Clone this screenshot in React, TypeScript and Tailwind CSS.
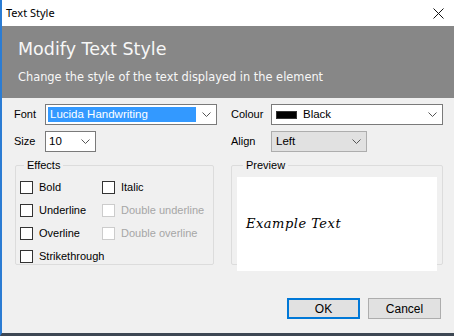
import React from 'react';

const Chevron: React.FC<{ className?: string }> = ({ className = '' }) => (
    <svg width="9" height="5" viewBox="0 0 9 5" className={className}>
        <polyline points="0.5,0.5 4.5,4.5 8.5,0.5" fill="none" stroke="#555" strokeWidth="1" />
    </svg>
);

const Check: React.FC<{ label: string; disabled?: boolean; width?: string }> = ({ label, disabled = false, width = 'w-[82px]' }) => (
    <label className={`flex items-center h-[13px] ${width}`}>
        <span
            className={`w-[13px] h-[13px] shrink-0 border bg-white ${disabled ? 'border-[#cccccc]' : 'border-[#333333]'}`}
        />
        <span className={`ml-[6px] whitespace-nowrap ${disabled ? 'text-[#a6a6a6]' : 'text-black'}`}>{label}</span>
    </label>
);

const Button: React.FC<{ label: string; primary?: boolean }> = ({ label, primary = false }) => (
    <button
        className={`w-[73px] h-[21px] bg-[#e1e1e1] flex items-center justify-center ${primary ? 'border-2 border-[#0078d7]' : 'border border-[#adadad]'}`}
    >
        {label}
    </button>
);

export default function App() {
    return (
        <div
            className="w-[454px] h-[336px] flex flex-col bg-[#f0f0f0] border-l-2 border-[#2b7cd3] border-b-[3px] border-b-[#3d4753] overflow-hidden text-[11px] text-black"
            style={{ fontFamily: '"Liberation Sans", Arial, sans-serif' }}
        >
            {/* window title bar */}
            <div className="h-[26px] shrink-0 bg-white flex items-center justify-between pl-[4px] pr-[10px]">
                <span className="text-[11px] text-black" style={{ fontFamily: '"Noto Sans", sans-serif' }}>
                    Text Style
                </span>
                <svg width="11" height="11" viewBox="0 0 11 11">
                    <path d="M0.5 0.5 L10.5 10.5 M10.5 0.5 L0.5 10.5" stroke="#111" strokeWidth="1" />
                </svg>
            </div>

            {/* banner */}
            <div
                className="h-[72px] shrink-0 bg-[#878787] pl-[16px] pt-[12px] text-[#f7f7f7]"
                style={{ fontFamily: '"DejaVu Sans", Verdana, sans-serif' }}
            >
                <div className="text-[17.5px] leading-[22px]">Modify Text Style</div>
                <div className="text-[11.4px] leading-[14px] mt-[10px]">Change the style of the text displayed in the element</div>
            </div>

            {/* body */}
            <div className="flex-1 flex flex-col pl-[12px] pr-[9px] pt-[6px]">
                <div className="flex">
                    {/* left column */}
                    <div className="w-[203px] flex flex-col">
                        <div className="flex items-center h-[21px]">
                            <span className="w-[31px]">Font</span>
                            <div className="w-[172px] h-[21px] bg-white border border-[#7a7a7a] flex items-center pl-[2px] pr-[5px]">
                                <span className="w-[148px] h-[15px] bg-[#3399ff] text-white pl-[2px] leading-[15px] text-[11.5px]">
                                    Lucida Handwriting
                                </span>
                                <Chevron className="ml-auto" />
                            </div>
                        </div>
                        <div className="flex items-center h-[21px] mt-[6px]">
                            <span className="w-[31px]">Size</span>
                            <div className="w-[51px] h-[21px] bg-white border border-[#7a7a7a] flex items-center pl-[3px] pr-[5px]">
                                <span className="text-[11.5px]">10</span>
                                <Chevron className="ml-auto" />
                            </div>
                        </div>
                        <fieldset className="ml-[1px] mt-[7px] w-[199px] h-[106px] border border-[#dcdcdc] rounded-[2px] pl-[4px]">
                            <legend className="ml-[4px] px-[3px] leading-[12px]">Effects</legend>
                            <div className="flex flex-col gap-[10px] mt-[10px]">
                                <div className="flex">
                                    <Check label="Bold" />
                                    <Check label="Italic" />
                                </div>
                                <div className="flex">
                                    <Check label="Underline" />
                                    <Check label="Double underline" disabled />
                                </div>
                                <div className="flex">
                                    <Check label="Overline" />
                                    <Check label="Double overline" disabled />
                                </div>
                                <div className="flex">
                                    <Check label="Strikethrough" />
                                </div>
                            </div>
                        </fieldset>
                    </div>

                    {/* right column */}
                    <div className="ml-[14px] flex-1 flex flex-col">
                        <div className="flex items-center h-[21px]">
                            <span className="w-[40px]">Colour</span>
                            <div className="w-[172px] h-[21px] bg-white border border-[#7a7a7a] flex items-center pl-[4px] pr-[5px]">
                                <span className="w-[21px] h-[8px] bg-black border border-[#333]" />
                                <span className="ml-[6px] text-[11.5px]">Black</span>
                                <Chevron className="ml-auto" />
                            </div>
                        </div>
                        <div className="flex items-center h-[21px] mt-[6px]">
                            <span className="w-[40px]">Align</span>
                            <div className="w-[96px] h-[21px] bg-[#e1e1e1] border border-[#adadad] flex items-center pl-[4px] pr-[5px]">
                                <span className="text-[11.5px]">Left</span>
                                <Chevron className="ml-auto" />
                            </div>
                        </div>
                        <fieldset className="mt-[7px] w-[212px] h-[106px] border border-[#dcdcdc] rounded-[2px] px-[5px]">
                            <legend className="ml-[6px] px-[3px] leading-[12px]">Preview</legend>
                            <div className="mt-[6px] h-[94px] bg-white flex items-center pl-[9px]">
                                <span
                                    className="text-[13px] italic tracking-[0.5px]"
                                    style={{ fontFamily: '"DejaVu Serif", serif' }}
                                >
                                    Example Text
                                </span>
                            </div>
                        </fieldset>
                    </div>
                </div>

                {/* buttons */}
                <div className="flex justify-end gap-[8px] mt-auto mb-[14px] pr-[4px] text-[12px]">
                    <Button label="OK" primary />
                    <Button label="Cancel" />
                </div>
            </div>
        </div>
    );
}
